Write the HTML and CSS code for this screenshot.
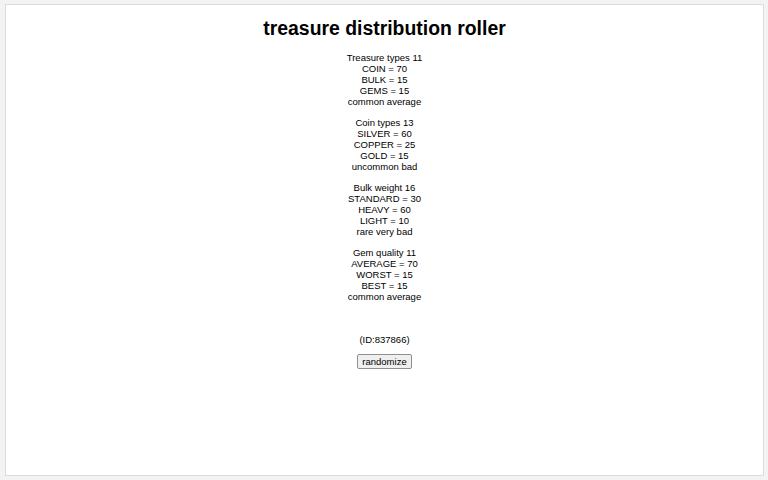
FILE: index.html
```html
<!DOCTYPE html>
<html>
<head>
<meta charset="utf-8">
<link rel="stylesheet" href="styles.css">
</head>
<body>
<div class="page">
  <h1 class="title">treasure distribution roller</h1>
  <div class="blocks">
    <div class="block">Treasure types 11<br>COIN = 70<br>BULK = 15<br>GEMS = 15<br>common average</div>
    <div class="block">Coin types 13<br>SILVER = 60<br>COPPER = 25<br>GOLD = 15<br>uncommon bad</div>
    <div class="block">Bulk weight 16<br>STANDARD = 30<br>HEAVY = 60<br>LIGHT = 10<br>rare very bad</div>
    <div class="block">Gem quality 11<br>AVERAGE = 70<br>WORST = 15<br>BEST = 15<br>common average</div>
  </div>
  <div class="id">(ID:837866)</div>
  <button class="btn">randomize</button>
</div>
</body>
</html>
```
FILE: styles.css
```css
html, body {
  margin: 0;
  height: 100%;
}
body {
  background: #f3f3f3;
  padding: 4px 4px 4px 5px;
  box-sizing: border-box;
  font-family: "Liberation Sans", Arial, sans-serif;
}
.page {
  background: #fff;
  border: 1px solid #dcdcdc;
  height: 100%;
  box-sizing: border-box;
  display: flex;
  flex-direction: column;
  align-items: center;
  color: #000;
}
.title {
  font-size: 19.4px;
  font-weight: bold;
  margin: 12px 0 0 0;
  line-height: 23px;
}
.blocks {
  margin-top: 12px;
  display: flex;
  flex-direction: column;
  gap: 10px;
  align-items: center;
}
.block {
  font-size: 9.5px;
  line-height: 11px;
  text-align: center;
}
.id {
  font-size: 9.5px;
  line-height: 11px;
  margin-top: 32px;
}
.btn {
  margin-top: 9px;
  font-family: "Liberation Sans", Arial, sans-serif;
  font-size: 9.5px;
  padding: 1px 4px;
  background: #efefef;
  border: 1px solid #8f8f8f;
  border-radius: 2px;
  color: #000;
}
```
